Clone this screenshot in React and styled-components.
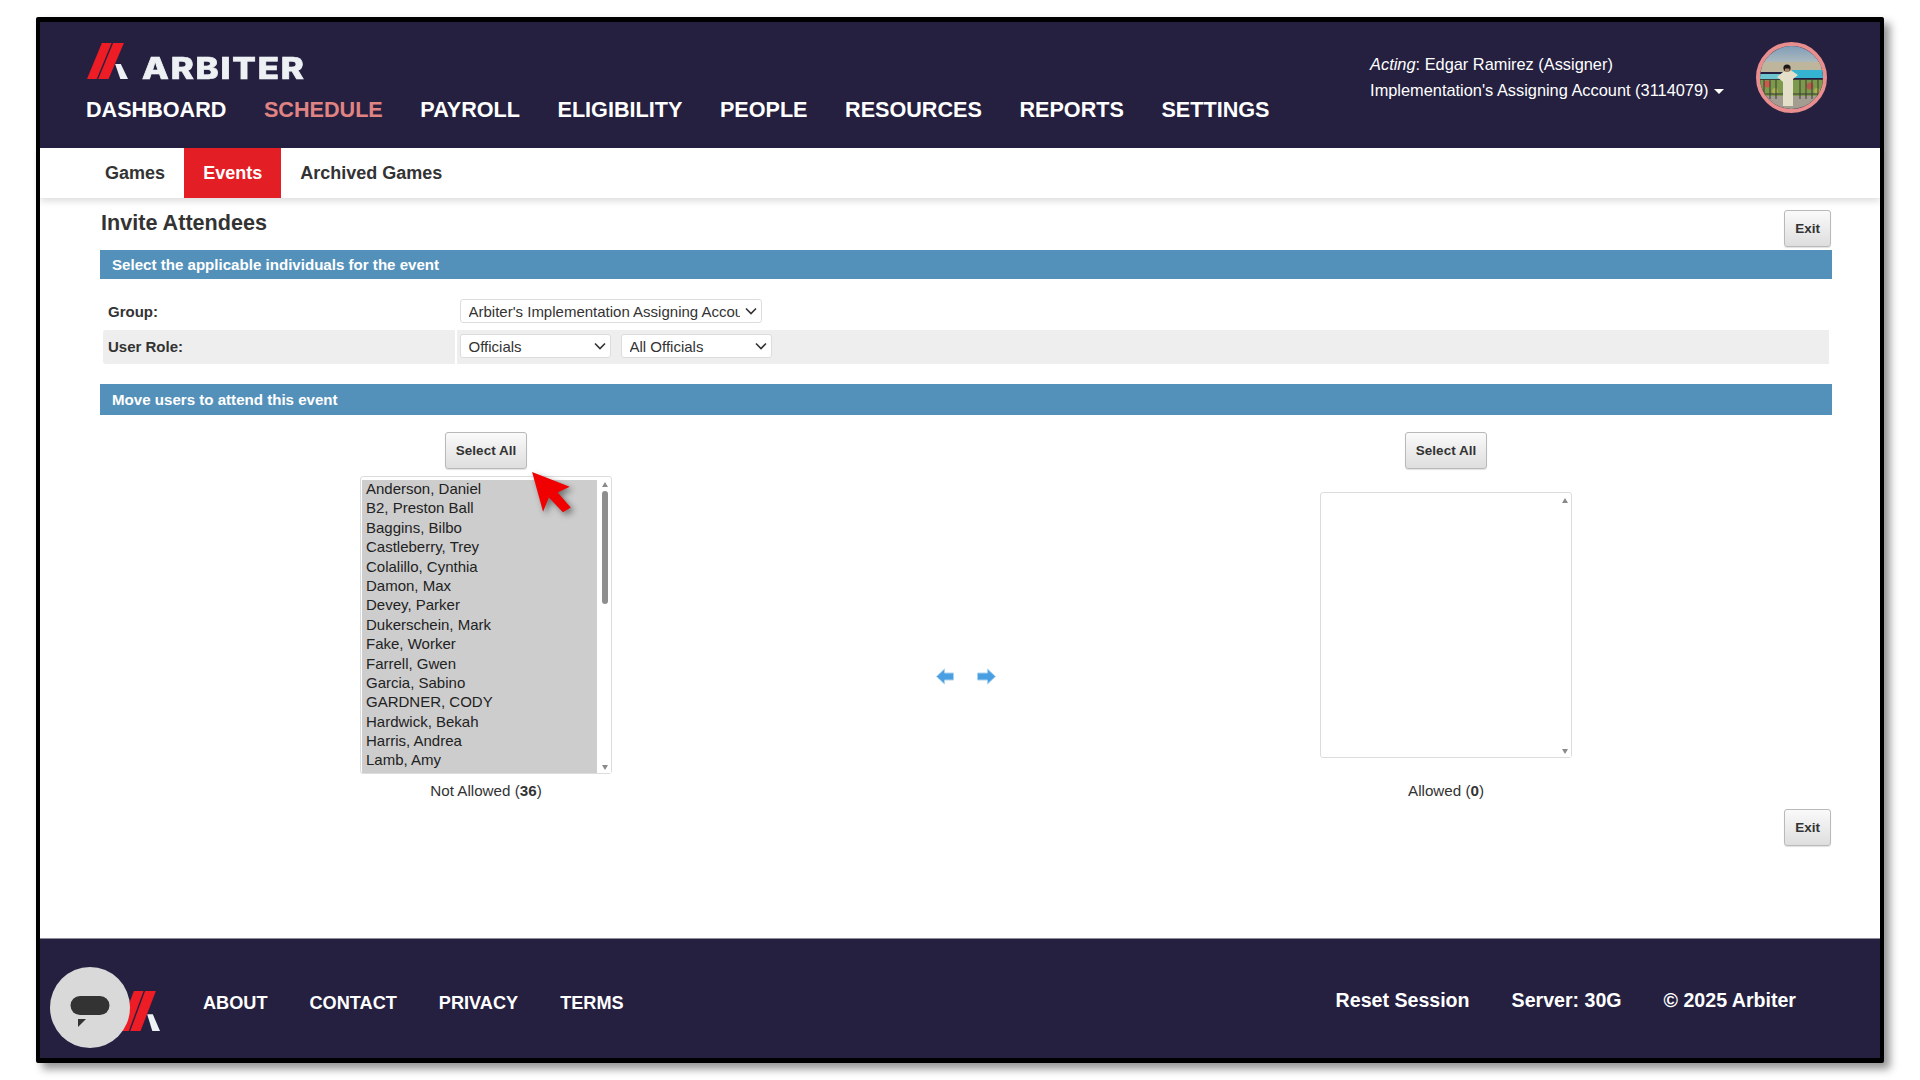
import React from "react";
import styled, { createGlobalStyle } from "styled-components";

const Global = createGlobalStyle`
  html, body { margin: 0; padding: 0; background: #fff; }
  body { font-family: "Liberation Sans", Arial, sans-serif; color: #333; }
  * { box-sizing: border-box; }
`;

const Page = styled.div`
  width: 1920px;
  height: 1080px;
  padding: 17px 36px 17px 36px;
  overflow: hidden;
  background: #fff;
`;
const Frame = styled.div`
  width: 1848px;
  height: 1046px;
  display: flex;
  flex-direction: column;
  border: solid #000;
  border-width: 5px 4px 5px 4px;
  border-radius: 2px;
  box-shadow: 6px 6px 8px rgba(0, 0, 0, 0.42);
  background: #fff;
`;
const Header = styled.header`
  height: 126px;
  flex: none;
  display: flex;
  justify-content: space-between;
  background: #252040;
  color: #fff;
  padding: 20px 53px 0 46px;
`;
const Brand = styled.div`
  display: flex;
  flex-direction: column;
`;
const LogoRow = styled.div`
  display: flex;
  align-items: flex-end;
  height: 36px;
  margin: 1px 0 0 1px;
  gap: 14px;
`;
const Wordmark = styled.span`
  display: inline-block;
  font-family: Inter, "Liberation Sans", sans-serif;
  font-weight: 800;
  font-size: 30px;
  line-height: 22px;
  letter-spacing: 1.6px;
  color: #eef1f4;
  -webkit-text-stroke: 0.7px #eef1f4;
  transform: scaleX(1.16);
  transform-origin: left center;
`;
const Nav = styled.nav`
  display: flex;
  gap: 37.6px;
  margin-top: 18px;
`;
const NavItem = styled.a`
  font-size: 21.6px;
  font-weight: 700;
  line-height: 26px;
  color: ${(p) => (p.$active ? "#e08383" : "#fff")};
`;
const UserArea = styled.div`
  display: flex;
  align-items: flex-start;
  gap: 32px;
`;
const UserInfo = styled.div`
  margin-top: 10px;
  font-size: 16.38px;
  line-height: 25.5px;
  color: #fff;
`;
const Caret = styled.span`
  display: inline-block;
  margin-left: 5.5px;
  vertical-align: middle;
  border-left: 5px solid transparent;
  border-right: 5px solid transparent;
  border-top: 5px solid #fff;
`;
const Avatar = styled.div`
  width: 71px;
  height: 71px;
  border-radius: 50%;
  border: 4px solid #e88e8e;
  overflow: hidden;
  flex: none;
  svg { display: block; }
`;
const SubNav = styled.div`
  height: 50px;
  flex: none;
  display: flex;
  padding-left: 46px;
  background: #fff;
  box-shadow: 0 3px 7px rgba(0, 0, 0, 0.14);
  position: relative;
`;
const Tab = styled.a`
  display: flex;
  align-items: center;
  padding: 0 19.05px;
  font-size: 18px;
  font-weight: 700;
  color: ${(p) => (p.$active ? "#fff" : "#333")};
  background: ${(p) => (p.$active ? "#e31e24" : "transparent")};
`;
const Main = styled.main`
  flex: 1;
  padding: 12px 48px 0 60px;
  position: relative;
`;
const TitleRow = styled.div`
  display: flex;
  justify-content: space-between;
  align-items: flex-start;
  height: 37px;
  margin-bottom: 3px;
  padding-right: 1px;
`;
const Title = styled.h1`
  margin: 1px 0 0 1px;
  font-size: 21.6px;
  line-height: 24px;
  font-weight: 700;
  color: #333;
`;
const Button = styled.button`
  height: 37px;
  padding: 0 10px;
  font-family: inherit;
  font-size: 13.5px;
  font-weight: 700;
  color: #333;
  background: linear-gradient(#fafafa, #dedede);
  border: 1px solid #b9b9b9;
  border-radius: 3px;
  box-shadow: 0 1px 1px rgba(0, 0, 0, 0.12);
`;
const Bar = styled.div`
  height: ${(p) => p.$h}px;
  display: flex;
  align-items: center;
  padding-left: 12px;
  background: #5491ba;
  color: #fff;
  font-size: 15.1px;
  font-weight: 700;
`;
const Form = styled.div`
  margin: 15px 3px 20px 3px;
  display: flex;
  flex-direction: column;
  gap: 2px;
`;
const FormRow = styled.div`
  display: grid;
  grid-template-columns: 352px 1fr;
  gap: 2px;
  height: 34px;
`;
const LabelCell = styled.div`
  display: flex;
  align-items: center;
  padding: 0 0 ${(p) => (p.$shaded ? 2 : 0)}px 5px;
  font-size: 15px;
  font-weight: 700;
  color: #333;
  background: ${(p) => (p.$shaded ? "#eeeeee" : "transparent")};
  border-radius: 3px 0 0 3px;
`;
const ValueCell = styled.div`
  display: flex;
  align-items: center;
  gap: 10px;
  padding: 0 0 ${(p) => (p.$shaded ? 2 : 0)}px 3px;
  background: ${(p) => (p.$shaded ? "#eeeeee" : "transparent")};
`;
const SelectWrap = styled.div`
  position: relative;
  width: ${(p) => p.$w}px;
  height: 24px;
  svg {
    position: absolute;
    right: 5px;
    top: 8px;
    pointer-events: none;
  }
`;
const Select = styled.select`
  appearance: none;
  display: block;
  width: 100%;
  height: 100%;
  padding: 0 21px 0 7.5px;
  font-family: inherit;
  font-size: 15px;
  color: #333;
  background: #fff;
  border: 1px solid #ddd;
  border-radius: 3px;
`;
const Transfer = styled.div`
  display: grid;
  grid-template-columns: 1fr 188px 1fr;
`;
const Column = styled.div`
  padding-top: 17px;
  display: flex;
  flex-direction: column;
  align-items: center;
`;
const Slot = styled.div`
  height: 298px;
  margin-top: 7px;
  display: flex;
  align-items: center;
`;
const ListBox = styled.div`
  width: 252px;
  height: ${(p) => p.$h}px;
  display: flex;
  background: #fff;
  border: 1px solid #dcdcdc;
  border-radius: 3px;
  padding: 3px 0 0 1px;
`;
const Options = styled.div`
  width: 235px;
  background: ${(p) => (p.$filled ? "#cdcdcd" : "#fff")};
`;
const Option = styled.div`
  height: 19.4px;
  line-height: 17.6px;
  padding-left: 4px;
  font-size: 15px;
  color: #222;
  white-space: nowrap;
`;
const Scroll = styled.div`
  flex: 1;
  position: relative;
  background: #fff;
`;
const ScrollArrow = styled.span`
  position: absolute;
  left: 4.5px;
  ${(p) => (p.$down ? "bottom: 3px" : "top: 2px")};
  border-left: 3.5px solid transparent;
  border-right: 3.5px solid transparent;
  ${(p) => (p.$down ? "border-top" : "border-bottom")}: 5px solid #8a8a8a;
`;
const Thumb = styled.div`
  position: absolute;
  left: 5px;
  top: 11px;
  width: 6px;
  height: 113px;
  border-radius: 3px;
  background: #8e8e8e;
`;
const Caption = styled.div`
  margin-top: 8px;
  font-size: 15.2px;
  line-height: 18px;
  color: #333;
  b { font-weight: 700; }
`;
const Arrows = styled.div`
  padding-top: 253px;
  display: flex;
  justify-content: center;
  gap: 23px;
  svg { display: block; }
`;
const BottomActions = styled.div`
  display: flex;
  justify-content: flex-end;
  margin-top: 9px;
  padding-right: 1px;
`;
const Cursor = styled.svg`
  position: absolute;
  left: 492px;
  top: 274px;
  filter: drop-shadow(3px 3px 3px rgba(0, 0, 0, 0.45));
`;
const Footer = styled.footer`
  height: 120px;
  flex: none;
  position: relative;
  display: flex;
  align-items: flex-start;
  background: #252040;
  border-top: 1px solid #8d8d96;
  padding: 50px 84px 0 79px;
  color: #fff;
  font-weight: 700;
`;
const FooterLogo = styled.div`
  margin-top: 2px;
  margin-right: 43px;
  svg { display: block; }
`;
const FooterLinks = styled.div`
  display: flex;
  gap: 42px;
  margin-top: 3px;
  font-size: 18.15px;
  line-height: 22px;
`;
const FooterMeta = styled.div`
  display: flex;
  gap: 42px;
  margin-left: auto;
  font-size: 19.6px;
  line-height: 22px;
`;
const ChatBubble = styled.div`
  position: absolute;
  left: 10px;
  top: 28px;
  width: 80px;
  height: 81px;
  border-radius: 50%;
  background: #d9d9d9;
  display: flex;
  justify-content: center;
  align-items: center;
  svg { display: block; margin-top: 8px; }
`;

const LogoMark = ({ h = 36 }) => (
  <svg width={41} height={h} viewBox="0 0 40 36" preserveAspectRatio="none">
    <path d="M0 36 L14.5 0 H24 L9.5 36Z" fill="#ee1c25" />
    <path d="M11 36 L25.5 0 H36 L21 36Z" fill="#ee1c25" />
    <path d="M27.5 21 H33 L40 36 H32.5Z" fill="#eef1f4" />
  </svg>
);

const Avatarpic = () => (
  <svg width="63" height="63" viewBox="0 0 63 63">
    <defs>
      <linearGradient id="sky" x1="0" y1="0" x2="0" y2="1">
        <stop offset="0" stopColor="#7f9db8" />
        <stop offset="1" stopColor="#b7c0bf" />
      </linearGradient>
    </defs>
    <rect width="63" height="20" fill="url(#sky)" />
    <rect y="16" width="63" height="10" fill="#bdb59c" />
    <rect x="32" y="24" width="31" height="8" fill="#35b4d2" />
    <rect y="28" width="32" height="5" fill="#6cc6cf" />
    <rect y="33" width="63" height="17" fill="#7c9a4a" />
    <circle cx="7" cy="38" r="3.5" fill="#c95b4a" />
    <circle cx="50" cy="40" r="3.5" fill="#b85a4a" />
    <circle cx="15" cy="45" r="3" fill="#a9b04e" />
    <circle cx="57" cy="45" r="3" fill="#a9b04e" />
    <rect y="50" width="63" height="13" fill="#a39c90" />
    <path d="M0 33.5 H63 M0 48 H63" stroke="#3b3b3b" strokeWidth="1" />
    <path d="M4 34 V53 M10 34 V53 M16 34 V53 M40 34 V53 M46 34 V53 M52 34 V53 M58 34 V53" stroke="#3b3b3b" strokeWidth="1" />
    <path d="M23 26 L32 25 L38 29 L33 33 V60 H23 V36 L17 31Z" fill="#e3dfc8" />
    <circle cx="27" cy="22" r="3.6" fill="#1c1714" />
    <rect x="25" y="22.5" width="4.5" height="3" fill="#a98468" />
  </svg>
);

const Chevron = () => (
  <svg width="12" height="8" viewBox="0 0 12 8">
    <path d="M1 1.5 L6 6.5 L11 1.5" fill="none" stroke="#333" strokeWidth="1.6" />
  </svg>
);

const LeftArrow = () => (
  <svg width="18" height="17" viewBox="0 0 18 17">
    <path d="M0.5 8.5 L8.5 1 V5 H17.5 V12 H8.5 V16Z" fill="#4a9fe2" stroke="#a9d2f0" strokeWidth="1" />
  </svg>
);
const RightArrow = () => (
  <svg width="19" height="17" viewBox="0 0 19 17">
    <path d="M18.5 8.5 L10.5 1 V5 H0.5 V12 H10.5 V16Z" fill="#4a9fe2" stroke="#a9d2f0" strokeWidth="1" />
  </svg>
);

const names = [
  "Anderson, Daniel", "B2, Preston Ball", "Baggins, Bilbo", "Castleberry, Trey",
  "Colalillo, Cynthia", "Damon, Max", "Devey, Parker", "Dukerschein, Mark",
  "Fake, Worker", "Farrell, Gwen", "Garcia, Sabino", "GARDNER, CODY",
  "Hardwick, Bekah", "Harris, Andrea", "Lamb, Amy",
];
const navItems = ["DASHBOARD", "SCHEDULE", "PAYROLL", "ELIGIBILITY", "PEOPLE", "RESOURCES", "REPORTS", "SETTINGS"];

export default function App() {
  return (
    <Page>
      <Global />
      <Frame>
        <Header>
          <Brand>
            <LogoRow>
              <LogoMark />
              <Wordmark>ARBITER</Wordmark>
            </LogoRow>
            <Nav>
              {navItems.map((n) => (
                <NavItem key={n} $active={n === "SCHEDULE"}>{n}</NavItem>
              ))}
            </Nav>
          </Brand>
          <UserArea>
            <UserInfo>
              <div><i>Acting</i>: Edgar Ramirez (Assigner)</div>
              <div>Implementation's Assigning Account (3114079)<Caret /></div>
            </UserInfo>
            <Avatar><Avatarpic /></Avatar>
          </UserArea>
        </Header>
        <SubNav>
          <Tab>Games</Tab>
          <Tab $active>Events</Tab>
          <Tab>Archived Games</Tab>
        </SubNav>
        <Main>
          <TitleRow>
            <Title>Invite Attendees</Title>
            <Button>Exit</Button>
          </TitleRow>
          <Bar $h={29}>Select the applicable individuals for the event</Bar>
          <Form>
            <FormRow>
              <LabelCell>Group:</LabelCell>
              <ValueCell>
                <SelectWrap $w={302}>
                  <Select>
                    <option>Arbiter's Implementation Assigning Account (3114079)</option>
                  </Select>
                  <Chevron />
                </SelectWrap>
              </ValueCell>
            </FormRow>
            <FormRow>
              <LabelCell $shaded>User Role:</LabelCell>
              <ValueCell $shaded>
                <SelectWrap $w={151}>
                  <Select><option>Officials</option></Select>
                  <Chevron />
                </SelectWrap>
                <SelectWrap $w={151}>
                  <Select><option>All Officials</option></Select>
                  <Chevron />
                </SelectWrap>
              </ValueCell>
            </FormRow>
          </Form>
          <Bar $h={31}>Move users to attend this event</Bar>
          <Transfer>
            <Column>
              <Button>Select All</Button>
              <Slot>
                <ListBox $h={298}>
                  <Options $filled>
                    {names.map((n) => <Option key={n}>{n}</Option>)}
                  </Options>
                  <Scroll>
                    <ScrollArrow />
                    <Thumb />
                    <ScrollArrow $down />
                  </Scroll>
                </ListBox>
              </Slot>
              <Caption>Not Allowed (<b>36</b>)</Caption>
            </Column>
            <Arrows>
              <LeftArrow />
              <RightArrow />
            </Arrows>
            <Column>
              <Button>Select All</Button>
              <Slot>
                <ListBox $h={266}>
                  <Options />
                  <Scroll>
                    <ScrollArrow />
                    <ScrollArrow $down />
                  </Scroll>
                </ListBox>
              </Slot>
              <Caption>Allowed (<b>0</b>)</Caption>
            </Column>
          </Transfer>
          <BottomActions>
            <Button>Exit</Button>
          </BottomActions>
          <Cursor width="42" height="46" viewBox="0 0 40 44">
            <path d="M0 0 L36 14 L24.5 19.5 L37 34 L29.5 38.5 L16 24.5 L10.5 38Z" fill="#f00000" />
          </Cursor>
        </Main>
        <Footer>
          <FooterLogo><LogoMark h={40} /></FooterLogo>
          <FooterLinks>
            <span>ABOUT</span>
            <span>CONTACT</span>
            <span>PRIVACY</span>
            <span>TERMS</span>
          </FooterLinks>
          <FooterMeta>
            <span>Reset Session</span>
            <span>Server: 30G</span>
            <span>© 2025 Arbiter</span>
          </FooterMeta>
          <ChatBubble>
            <svg width="40" height="32" viewBox="0 0 40 32">
              <rect x="0.5" y="0" width="39" height="19" rx="9.5" fill="#333" />
              <path d="M8 23 H16 L8 31Z" fill="#333" />
            </svg>
          </ChatBubble>
        </Footer>
      </Frame>
    </Page>
  );
}
